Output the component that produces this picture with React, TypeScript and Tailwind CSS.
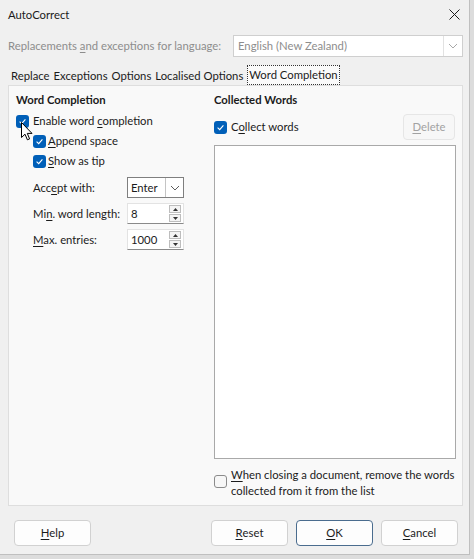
import React from 'react';

function Key({ children }: { children: React.ReactNode }) {
  return <span className="underline underline-offset-[2px] decoration-[1px]">{children}</span>;
}

function Check({ on }: { on?: boolean }) {
  if (!on) {
    return <span className="block w-[13px] h-[13px] rounded-[3px] border border-[#8b8b8b] bg-[#f7f7f7] shrink-0" />;
  }
  return (
    <span className="w-[13px] h-[13px] rounded-[3px] bg-[#005fb8] flex items-center justify-center shrink-0">
      <svg width="9" height="9" viewBox="0 0 9 9">
        <path d="M1.6 4.7 L3.7 6.7 L7.4 2.4" fill="none" stroke="#ffffff" strokeWidth="1.1" />
      </svg>
    </span>
  );
}

function Chevron({ color = '#5c5c5c' }: { color?: string }) {
  return (
    <svg width="10" height="6" viewBox="0 0 10 6">
      <path d="M1 1 L5 5 L9 1" fill="none" stroke={color} strokeWidth="1" />
    </svg>
  );
}

function Spin({ value }: { value: string }) {
  return (
    <div className="w-[57px] h-[21px] bg-white border border-[#e3e3e3] border-b-[#8a8a8a] flex items-center justify-between pl-[3px] pr-[2px]">
      <span>{value}</span>
      <div className="flex flex-col gap-[1px]">
        <span className="w-[12px] h-[8px] border border-[#bdbdbd] bg-[#f4f4f4] flex items-center justify-center">
          <svg width="5" height="3" viewBox="0 0 5 3"><path d="M0 3 L2.5 0 L5 3 Z" fill="#333" /></svg>
        </span>
        <span className="w-[12px] h-[8px] border border-[#bdbdbd] bg-[#f4f4f4] flex items-center justify-center">
          <svg width="5" height="3" viewBox="0 0 5 3"><path d="M0 0 L2.5 3 L5 0 Z" fill="#333" /></svg>
        </span>
      </div>
    </div>
  );
}

function Button({ children, primary, disabled, w = 'w-[77px]' }: { children: React.ReactNode; primary?: boolean; disabled?: boolean; w?: string }) {
  return (
    <div
      className={`${w} h-[26px] rounded-[4px] flex items-center justify-center border ${
        primary ? 'border-[#4a6c8e] bg-[#fdfdfd]' : disabled ? 'border-[#e6e6e6] bg-[#f7f7f7] text-[#a2a2a2]' : 'border-[#d1d1d1] bg-[#fdfdfd]'
      }`}
    >
      {children}
    </div>
  );
}

const tabs = ['Replace', 'Exceptions', 'Options', 'Localised Options'];

export default function App() {
  return (
    <div className="w-[474px] h-[559px] bg-[#dcdcdc] text-[11.3px] leading-[16px] text-[#1b1b1b] font-['Lato',sans-serif] whitespace-nowrap relative overflow-hidden">
      <div className="w-[470px] h-[555px] bg-[#f0f0f0] border-r border-b border-[#bfbfbf] flex flex-col">
        {/* title bar */}
        <div className="h-[29px] flex items-center justify-between pl-[8px] pr-[9px]">
          <span>AutoCorrect</span>
          <svg width="11" height="11" viewBox="0 0 11 11">
            <path d="M0.5 0.5 L10.5 10.5 M10.5 0.5 L0.5 10.5" stroke="#1b1b1b" strokeWidth="1" />
          </svg>
        </div>

        {/* language row */}
        <div className="h-[22px] mt-[6px] flex items-center pl-[8px]">
          <span className="text-[#8d8d8d] w-[225px]">
            Replacements <Key>a</Key>nd exceptions for language:
          </span>
          <div className="w-[230px] h-[22px] bg-white border border-[#cfcfcf] flex items-center justify-between pl-[4px]">
            <span className="text-[#8d8d8d]">English (New Zealand)</span>
            <span className="w-[19px] h-[20px] border-l border-[#e2e2e2] flex items-center justify-center">
              <Chevron color="#a8a8a8" />
            </span>
          </div>
        </div>

        {/* tabs */}
        <div className="mt-[8px] h-[20px] flex items-end pl-[11px] gap-[4px]">
          {tabs.map((t) => (
            <span key={t} className="h-[19px] flex items-center">
              {t}
            </span>
          ))}
          <span className="h-[20px] px-[1px] flex items-center bg-[#fafafa] border border-dotted border-[#333]">Word Completion</span>
        </div>

        {/* page */}
        <div className="mx-[8px] w-[455px] h-[421px] bg-[#f9f9f9] border border-[#dedede] flex pl-[7px] pr-[6px] pt-[6px]">
          <div className="w-[198px] flex flex-col">
            <span className="font-bold">Word Completion</span>
            <div className="mt-[5px] flex items-center gap-[4px]">
              <Check on />
              <span>
                Enable word <Key>c</Key>ompletion
              </span>
            </div>
            <div className="mt-[4px] ml-[17px] flex items-center gap-[2px]">
              <Check on />
              <span>
                <Key>A</Key>ppend space
              </span>
            </div>
            <div className="mt-[4px] ml-[17px] flex items-center gap-[2px]">
              <Check on />
              <span>
                <Key>S</Key>how as tip
              </span>
            </div>
            <div className="mt-[8px] ml-[17px] flex items-center">
              <span className="w-[94px]">
                Acc<Key>e</Key>pt with:
              </span>
              <div className="w-[57px] h-[21px] bg-white border border-[#7f7f7f] flex items-center justify-between pl-[3px]">
                <span>Enter</span>
                <span className="w-[18px] h-[19px] border-l border-[#c4c4c4] flex items-center justify-center">
                  <Chevron />
                </span>
              </div>
            </div>
            <div className="mt-[5px] ml-[17px] flex items-center">
              <span className="w-[94px]">
                Mi<Key>n</Key>. word length:
              </span>
              <Spin value="8" />
            </div>
            <div className="mt-[5px] ml-[17px] flex items-center">
              <span className="w-[94px]">
                <Key>M</Key>ax. entries:
              </span>
              <Spin value="1000" />
            </div>
          </div>

          <div className="w-[242px] flex flex-col">
            <span className="font-bold">Collected Words</span>
            <div className="mt-[6px] flex items-center justify-between">
              <div className="flex items-center gap-[4px]">
                <Check on />
                <span>
                  C<Key>o</Key>llect words
                </span>
              </div>
              <div className="mr-[1px]">
                <Button disabled w="w-[52px]">
                  <Key>D</Key>elete
                </Button>
              </div>
            </div>
            <div className="mt-[5px] h-[314px] bg-white border border-[#a9a9a9]" />
            <div className="mt-[8px] flex items-start gap-[4px]">
              <span className="mt-[8px]">
                <Check />
              </span>
              <span>
                <Key>W</Key>hen closing a document, remove the words
                <br />
                collected from it from the list
              </span>
            </div>
          </div>
        </div>

        {/* dialog buttons */}
        <div className="mt-[14px] flex items-center pl-[14px] pr-[11px]">
          <Button>
            <Key>H</Key>elp
          </Button>
          <div className="flex-1" />
          <div className="flex gap-[8px]">
            <Button>
              <Key>R</Key>eset
            </Button>
            <Button primary>
              <Key>O</Key>K
            </Button>
            <Button>
              <Key>C</Key>ancel
            </Button>
          </div>
        </div>
      </div>

      {/* mouse pointer */}
      <svg className="absolute left-[21px] top-[122px]" width="13" height="20" viewBox="0 0 13 20">
        <path d="M0.5 0.5 L0.5 15.5 L4 12.2 L6.4 17.8 L8.6 16.9 L6.3 11.4 L11 11.4 Z" fill="#ffffff" stroke="#000000" strokeWidth="1" strokeLinejoin="round" />
      </svg>
    </div>
  );
}
